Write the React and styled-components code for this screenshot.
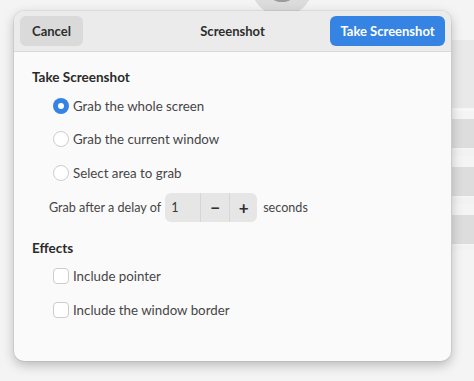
import React from "react";
import styled, { createGlobalStyle } from "styled-components";

const Global = createGlobalStyle`
  html, body { margin: 0; padding: 0; }
  body { font-family: Lato, "Noto Sans", sans-serif; }
  * { box-sizing: border-box; }
`;

const Desktop = styled.div`
  position: relative;
  width: 474px;
  height: 381px;
  overflow: hidden;
  background: #f4f4f4;
  padding: 11px 0 0 14px;
`;

const CameraBadge = styled.div`
  position: absolute;
  left: 251px;
  top: -46px;
  width: 62px;
  height: 62px;
  border-radius: 50%;
  background: #dcdcdc;
  display: flex;
  align-items: center;
  justify-content: center;
  &::after {
    content: "";
    width: 34px;
    height: 34px;
    border-radius: 50%;
    background: #8f8f8f;
    box-shadow: inset 0 0 0 8px #9c9c9c;
  }
`;

const SideStrip = styled.div`
  position: absolute;
  left: 452px;
  width: 22px;
  top: ${(p) => p.$top}px;
  height: ${(p) => p.$h}px;
  background: ${(p) => p.$bg};
`;

const Dialog = styled.div`
  position: relative;
  width: 437px;
  height: 350px;
  border-radius: 10px;
  overflow: hidden;
  background: #fafafa;
  box-shadow: 0 4px 12px rgba(0, 0, 0, 0.25), 0 0 0 1px rgba(0, 0, 0, 0.05);
  display: flex;
  flex-direction: column;
`;

const HeaderBar = styled.div`
  height: 41px;
  flex: none;
  background: #ebebeb;
  border-bottom: 1px solid #d9d9d9;
  display: grid;
  grid-template-columns: 1fr auto 1fr;
  align-items: center;
  padding: 0 6px;
`;

const Button = styled.button`
  height: 30px;
  border: none;
  border-radius: 6px;
  font-family: inherit;
  font-weight: 700;
  font-size: 13px;
  white-space: nowrap;
  padding: 0;
  background: ${(p) => (p.$primary ? "#3584e4" : "#dadada")};
  color: ${(p) => (p.$primary ? "#ffffff" : "#2e2e2e")};
  justify-self: ${(p) => (p.$primary ? "end" : "start")};
  width: ${(p) => p.$w}px;
`;

const Title = styled.div`
  font-weight: 700;
  font-size: 13px;
  color: #2e2e2e;
`;

const Body = styled.div`
  padding: 17px 18px 0 18px;
  display: flex;
  flex-direction: column;
`;

const Heading = styled.div`
  font-weight: 700;
  font-size: 13.5px;
  line-height: 17px;
  height: 17px;
  color: #2a2a2a;
  margin-top: ${(p) => p.$mt || 0}px;
  margin-bottom: ${(p) => p.$mb || 0}px;
`;

const OptionRow = styled.div`
  height: 33.5px;
  display: flex;
  align-items: center;
  gap: 4px;
  padding-left: 21px;
  font-size: 13.3px;
  color: #464646;
  white-space: nowrap;
`;

const Radio = styled.span`
  width: 16px;
  height: 16px;
  border-radius: 50%;
  flex: none;
  display: flex;
  align-items: center;
  justify-content: center;
  background: ${(p) => (p.$on ? "#3584e4" : "#ffffff")};
  border: ${(p) => (p.$on ? "none" : "1.5px solid #cdcdcd")};
  &::after {
    content: "";
    display: ${(p) => (p.$on ? "block" : "none")};
    width: 6px;
    height: 6px;
    border-radius: 50%;
    background: #ffffff;
  }
`;

const Check = styled.span`
  width: 16px;
  height: 16px;
  border-radius: 4px;
  flex: none;
  background: #ffffff;
  border: 1.5px solid #cdcdcd;
`;

const DelayRow = styled.div`
  height: 30px;
  margin-top: 3px;
  padding-left: 17px;
  display: flex;
  align-items: center;
  font-size: 12.6px;
  color: #464646;
  white-space: nowrap;
`;

const Spin = styled.div`
  display: flex;
  height: 29px;
  margin: 0 6px 0 4px;
  border-radius: 6px;
  background: #e6e6e6;
  overflow: hidden;
`;

const SpinEntry = styled.div`
  width: 35px;
  display: flex;
  align-items: center;
  padding-left: 6px;
  color: #3a3a3a;
`;

const SpinButton = styled.div`
  width: ${(p) => p.$w}px;
  border-left: 1px solid #d6d6d6;
  display: flex;
  align-items: center;
  justify-content: center;
  font-size: 17px;
  font-weight: 700;
  color: #2e2e2e;
`;

export default function App() {
  return (
    <>
      <Global />
      <Desktop>
        <CameraBadge />
        <SideStrip $top={40} $h={68} $bg="#e9e9e9" />
        <SideStrip $top={108} $h={3} $bg="#f7f7f7" />
        <SideStrip $top={119} $h={29} $bg="#dddddd" />
        <SideStrip $top={150} $h={6} $bg="#f2f2f2" />
        <SideStrip $top={167} $h={29} $bg="#dddddd" />
        <SideStrip $top={198} $h={6} $bg="#f2f2f2" />
        <SideStrip $top={215} $h={29} $bg="#dddddd" />
        <SideStrip $top={246} $h={4} $bg="#f2f2f2" />
        <Dialog>
          <HeaderBar>
            <Button $w={63}>Cancel</Button>
            <Title>Screenshot</Title>
            <Button $primary $w={115}>Take Screenshot</Button>
          </HeaderBar>
          <Body>
            <Heading $mb={3}>Take Screenshot</Heading>
            <OptionRow>
              <Radio $on />
              Grab the whole screen
            </OptionRow>
            <OptionRow>
              <Radio />
              Grab the current window
            </OptionRow>
            <OptionRow>
              <Radio />
              Select area to grab
            </OptionRow>
            <DelayRow>
              Grab after a delay of
              <Spin>
                <SpinEntry>1</SpinEntry>
                <SpinButton $w={29}>−</SpinButton>
                <SpinButton $w={28}>+</SpinButton>
              </Spin>
              seconds
            </DelayRow>
            <Heading $mt={17} $mb={3}>Effects</Heading>
            <OptionRow>
              <Check />
              Include pointer
            </OptionRow>
            <OptionRow>
              <Check />
              Include the window border
            </OptionRow>
          </Body>
        </Dialog>
      </Desktop>
    </>
  );
}
